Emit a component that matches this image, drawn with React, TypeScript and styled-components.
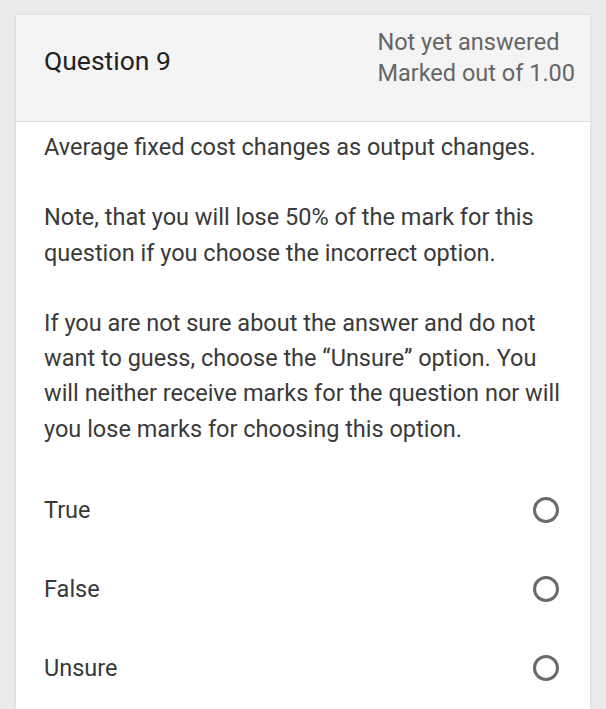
import styled, { createGlobalStyle } from "styled-components";

const GlobalStyle = createGlobalStyle`
  html, body {
    margin: 0;
    padding: 0;
    background: #ebebeb;
    font-family: Roboto, "Noto Sans", "Liberation Sans", sans-serif;
  }
`;

const options = ["True", "False", "Unsure"];

export default function App() {
  return (
    <>
      <GlobalStyle />
      <Page>
        <Card>
          <Header>
            <Title>Question 9</Title>
            <Status>
              <span>Not yet answered</span>
              <span>Marked out of 1.00</span>
            </Status>
          </Header>
          <Body>
            <Para>Average fixed cost changes as output changes.</Para>
            <Para>
              Note, that you will lose 50% of the mark for this question if you
              choose the incorrect option.
            </Para>
            <Para>
              If you are not sure about the answer and do not want to guess,
              choose the “Unsure” option. You will neither receive marks for the
              question nor will you lose marks for choosing this option.
            </Para>
            <Options>
              {options.map((o) => (
                <Option key={o}>
                  <Label>{o}</Label>
                  <Radio />
                </Option>
              ))}
            </Options>
          </Body>
        </Card>
      </Page>
    </>
  );
}

const Page = styled.div`
  min-height: 709px;
  padding: 15px 16px 0 16px;
  box-sizing: border-box;
  display: flex;
  flex-direction: column;
`;

const Card = styled.div`
  flex: 1;
  background: #fff;
  box-shadow: 0 0 3px rgba(0, 0, 0, 0.12);
`;

const Header = styled.div`
  display: flex;
  justify-content: space-between;
  align-items: center;
  height: 107px;
  box-sizing: border-box;
  padding: 12px 15px 32px 28px;
  background: #f4f4f4;
  border-bottom: 1px solid #dedede;
`;

const Title = styled.div`
  font-size: 26.5px;
  color: #222;
  padding-top: 5px;
`;

const Status = styled.div`
  display: flex;
  flex-direction: column;
  align-items: flex-start;
  font-size: 23.5px;
  line-height: 31px;
  color: #666;
`;

const Body = styled.div`
  padding: 8px 28px 0 28px;
`;

const Para = styled.p`
  margin: 0 0 35px 0;
  font-size: 23.5px;
  line-height: 35.3px;
  color: #3a3a3a;
  &:last-of-type {
    margin-bottom: 23px;
  }
`;

const Options = styled.div`
  display: flex;
  flex-direction: column;
`;

const Option = styled.div`
  display: flex;
  align-items: center;
  justify-content: space-between;
  height: 79px;
  padding-right: 3px;
`;

const Label = styled.span`
  font-size: 23.5px;
  color: #383838;
`;

const Radio = styled.span`
  width: 20px;
  height: 20px;
  border: 3px solid #6a6a6a;
  border-radius: 50%;
`;
